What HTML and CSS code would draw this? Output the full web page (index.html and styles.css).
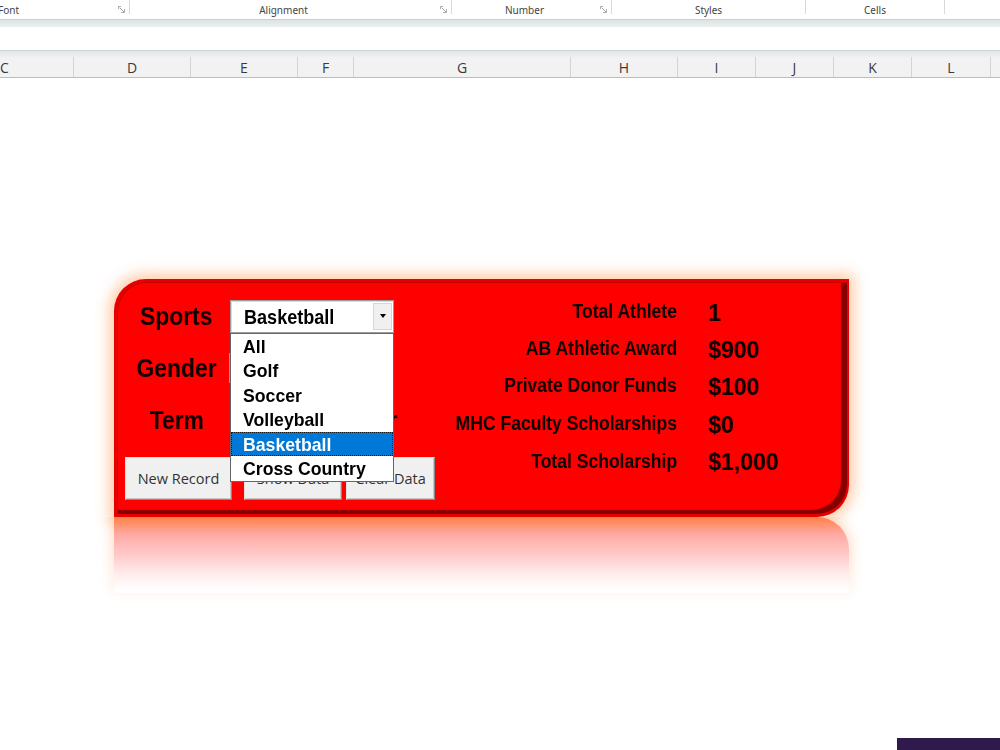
FILE: index.html
```html
<!DOCTYPE html>
<html>
<head>
<meta charset="utf-8">
<link rel="stylesheet" href="styles.css">
</head>
<body>
<div class="frame">
<div class="ribbon">
  <div class="grp g-font"><span class="gl">Font</span><svg class="launch" viewBox="0 0 8 8"><path d="M0.5 3.5V0.5H3.5M2 2L7 7M7.5 3.5V7.5H3.5" fill="none" stroke="#9a9a9a" stroke-width="1"/></svg></div><div class="sep"></div>
  <div class="grp g-align"><span class="gl">Alignment</span><svg class="launch" viewBox="0 0 8 8"><path d="M0.5 3.5V0.5H3.5M2 2L7 7M7.5 3.5V7.5H3.5" fill="none" stroke="#9a9a9a" stroke-width="1"/></svg></div><div class="sep"></div>
  <div class="grp g-num"><span class="gl">Number</span><svg class="launch" viewBox="0 0 8 8"><path d="M0.5 3.5V0.5H3.5M2 2L7 7M7.5 3.5V7.5H3.5" fill="none" stroke="#9a9a9a" stroke-width="1"/></svg></div><div class="sep"></div>
  <div class="grp g-sty"><span class="gl">Styles</span></div><div class="sep"></div>
  <div class="grp g-cells"><span class="gl">Cells</span></div><div class="sep"></div>
  <div class="grp g-more"></div>
</div>
<div class="band"></div>
<div class="formula"></div>
<div class="band2"></div>
<div class="colhdr">
  <div class="col c-c">C</div>
  <div class="col c-d">D</div>
  <div class="col c-e">E</div>
  <div class="col c-f">F</div>
  <div class="col c-g">G</div>
  <div class="col c-h">H</div>
  <div class="col c-i">I</div>
  <div class="col c-j">J</div>
  <div class="col c-k">K</div>
  <div class="col c-l">L</div>
  <div class="col c-m"></div>
</div>
<div class="sheet">
  <div class="panel">
    <div class="form">
      <div class="row">
        <div class="lbl"><span>Sports</span></div>
        <div class="combo sports">
          <span class="cv">Basketball</span>
          <span class="arrow"><span class="tri"></span></span>
          <div class="dlist">
            <div class="opt"><span>All</span></div>
            <div class="opt"><span>Golf</span></div>
            <div class="opt"><span>Soccer</span></div>
            <div class="opt"><span>Volleyball</span></div>
            <div class="opt sel"><span>Basketball</span></div>
            <div class="opt"><span>Cross Country</span></div>
          </div>
        </div>
      </div>
      <div class="row">
        <div class="lbl"><span>Gender</span></div>
        <div class="combo gender"></div>
      </div>
      <div class="row">
        <div class="lbl"><span>Term</span></div>
        <span class="tv">Summer</span>
      </div>
      <div class="btns">
        <div class="btn b-new">New Record</div>
        <div class="btn b-show">Show Data</div>
        <div class="btn b-clear">Clear Data</div>
      </div>
    </div>
    <div class="summary">
      <div class="k"><span>Total Athlete</span></div><div class="v">1</div>
      <div class="k"><span>AB Athletic Award</span></div><div class="v">$900</div>
      <div class="k"><span>Private Donor Funds</span></div><div class="v">$100</div>
      <div class="k"><span>MHC Faculty Scholarships</span></div><div class="v">$0</div>
      <div class="k"><span>Total Scholarship</span></div><div class="v">$1,000</div>
    </div>
  </div>
  <div class="reflect"><div class="rinner"></div></div>
</div>
<div class="taskbar"></div>
</div>
</body>
</html>
```
FILE: styles.css
```css
html, body {
  margin: 0;
  padding: 0;
}
body {
  background: #ffffff;
  font-family: "Liberation Sans", Arial, sans-serif;
}
.frame {
  width: 1000px;
  height: 750px;
  overflow: hidden;
  position: relative;
}

/* ribbon group labels */
.ribbon {
  display: flex;
  height: 19px;
  margin-left: -98px;
  font-family: "Noto Sans", "Open Sans", sans-serif;
  font-size: 10px;
  color: #444;
}
.grp {
  display: flex;
  align-items: center;
  flex: none;
  height: 19px;
}
.gl {
  flex: 1;
  text-align: center;
  padding-top: 1px;
}
.launch {
  width: 7px;
  height: 7px;
  margin: 0 4px 0 3px;
  flex: none;
}
.sep {
  width: 1px;
  height: 14px;
  background: #d9d9d9;
  flex: none;
}
.g-font { width: 227px; }
.g-align { width: 321px; }
.g-num { width: 159px; }
.g-sty { width: 193px; }
.g-cells { width: 138px; }
.g-more { width: 200px; }

.band {
  height: 7px;
  border-top: 1px solid #c9d0d0;
  background: linear-gradient(#dce3e3, #ecf0f0);
}
.formula {
  height: 23px;
  background: #ffffff;
}
.band2 {
  height: 6px;
  border-top: 1px solid #cfd5d5;
  background: linear-gradient(#e2e7e7, #eef1f1);
}

/* column header */
.colhdr {
  display: flex;
  height: 20px;
  margin-left: -64px;
  background: #f2f2f2;
  border-bottom: 1px solid #bdbdbd;
  font-family: "Open Sans", "Noto Sans", sans-serif;
  font-size: 14px;
  color: #3a3a3a;
}
.col {
  flex: none;
  box-sizing: border-box;
  border-right: 1px solid #d4d4d4;
  display: flex;
  align-items: center;
  justify-content: center;
}
.c-c { width: 138px; }
.c-d { width: 117px; }
.c-e { width: 107px; }
.c-f { width: 56px; }
.c-g { width: 217px; }
.c-h { width: 107px; }
.c-i { width: 78px; }
.c-j { width: 78px; }
.c-k { width: 78px; }
.c-l { width: 79px; }
.c-m { width: 80px; }

/* the red dashboard panel */
.panel {
  margin: 201px 0 0 114px;
  width: 735px;
  height: 238px;
  box-sizing: border-box;
  background: #ff0000;
  border: 3px solid #e80000;
  border-right-width: 2px;
  border-radius: 32px 0 32px 0;
  box-shadow: 0 0 14px 5px rgba(255, 140, 60, 0.45),
              inset 1px 1px 0 #c80000,
              inset -6px -4px 1px #870000;
  display: flex;
  padding: 8px 0 0 8px;
  position: relative;
  z-index: 1;
}
.form {
  width: 310px;
  flex: none;
  display: flex;
  flex-direction: column;
}
.row {
  height: 52px;
  display: flex;
  align-items: center;
}
.lbl {
  width: 103px;
  flex: none;
  text-align: center;
  font-weight: bold;
  font-size: 26px;
  color: #110000;
  white-space: nowrap;
}
.lbl span {
  display: inline-block;
  transform: scaleX(0.88);
}
.combo {
  box-sizing: border-box;
  width: 164px;
  background: #ffffff;
  border: 1px solid #9c9c9c;
  box-shadow: inset 1px 1px 0 #dadada;
  display: flex;
  align-items: center;
  position: relative;
}
.combo.sports {
  height: 33px;
  margin-left: 2px;
  z-index: 3;
}
.combo.gender {
  height: 30px;
  margin-left: 1px;
}
.cv {
  display: inline-block;
  margin-left: 13px;
  padding-top: 2px;
  font-weight: bold;
  font-size: 21px;
  color: #000;
  transform: scaleX(0.86);
  transform-origin: left center;
  white-space: nowrap;
}
.arrow {
  margin-left: auto;
  margin-right: 1px;
  width: 19px;
  height: 27px;
  box-sizing: border-box;
  background: #f0f0f0;
  border: 1px solid #d6d6d6;
  display: flex;
  align-items: center;
  justify-content: center;
}
.tri {
  width: 0;
  height: 0;
  border-left: 3.5px solid transparent;
  border-right: 3.5px solid transparent;
  border-top: 4px solid #000;
}
.dlist {
  position: absolute;
  left: -1px;
  top: calc(100% + 1px);
  width: 164px;
  box-sizing: border-box;
  background: #ffffff;
  border: 1px solid #666666;
}
.opt {
  height: 24.5px;
  line-height: 25.5px;
  padding-left: 12px;
  font-weight: bold;
  font-size: 19px;
  color: #000;
  white-space: nowrap;
}
.opt span {
  display: inline-block;
  transform: scaleX(0.93);
  transform-origin: left center;
}
.opt.sel {
  background: #0078d7;
  color: #ffffff;
  outline: 1px dotted #1a1a1a;
  outline-offset: -1px;
}
.tv {
  display: inline-block;
  margin-left: 78px;
  font-weight: bold;
  font-size: 26px;
  color: #110000;
  transform: scaleX(0.88);
  transform-origin: left center;
  white-space: nowrap;
}
.btns {
  display: flex;
  margin-top: 11px;
}
.btn {
  height: 43px;
  box-sizing: border-box;
  background: #f0f0f0;
  border: 1px solid;
  border-color: #e2e2e2 #8a8a8a #8a8a8a #e2e2e2;
  box-shadow: inset -1px -1px 0 #c8c8c8;
  display: flex;
  align-items: center;
  justify-content: center;
  font-family: "Open Sans", "Noto Sans", sans-serif;
  font-size: 14.5px;
  color: #333;
  white-space: nowrap;
}
.b-new { width: 107px; }
.b-show { width: 98px; margin-left: 12px; }
.b-clear { width: 89px; margin-left: 4px; }

.summary {
  margin-left: 18px;
  margin-top: 3px;
  display: grid;
  grid-template-columns: 224px max-content;
  grid-template-rows: 37px 37px 37px 39px 36px;
  column-gap: 31px;
  align-items: center;
  align-content: start;
}
.k {
  display: flex;
  justify-content: flex-end;
  font-weight: bold;
  font-size: 19.5px;
  color: #110000;
  white-space: nowrap;
}
.k span {
  flex: none;
  display: inline-block;
  transform: scaleX(0.9);
  transform-origin: right center;
}
.v {
  font-weight: bold;
  font-size: 23px;
  color: #110000;
  padding-top: 3px;
  white-space: nowrap;
}

/* reflection under the panel */
.reflect {
  margin-left: 99px;
  width: 735px;
  padding: 0 15px 20px;
  -webkit-mask-image: linear-gradient(#000 0%, rgba(0,0,0,0.75) 45%, transparent 100%);
  mask-image: linear-gradient(#000 0%, rgba(0,0,0,0.75) 45%, transparent 100%);
}
.rinner {
  height: 76px;
  border-top-right-radius: 32px;
  background: linear-gradient(#ff8150 0%, #ff9f98 22%, #ffb8b8 48%, #ffe0e0 78%, #ffffff 100%);
  box-shadow: 0 0 12px 3px rgba(255, 150, 80, 0.35);
}

.taskbar {
  position: absolute;
  right: 0;
  bottom: 0;
  width: 103px;
  height: 12px;
  background: #2f1a4e;
}
```
